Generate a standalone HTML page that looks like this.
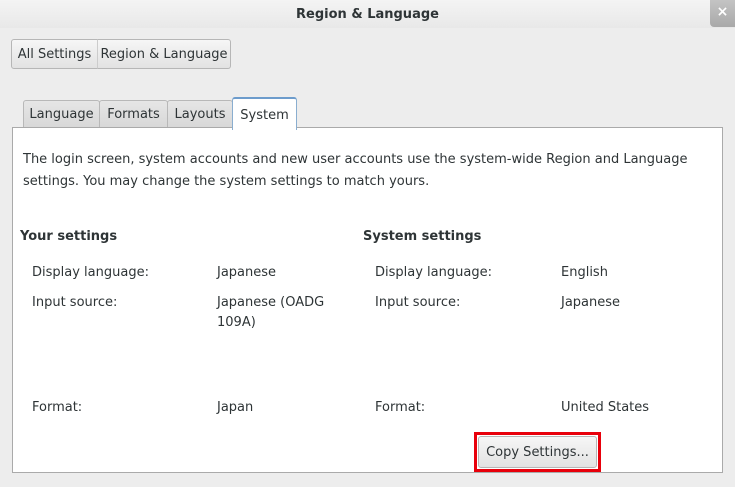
<!DOCTYPE html>
<html><head><style>
body{margin:0;width:735px;height:487px;background:#ededed;font-family:"DejaVu Sans","Liberation Sans",sans-serif;font-size:13px;color:#2e3436;position:relative;overflow:hidden}
.a{position:absolute;white-space:nowrap}
#title{left:0;top:0;width:735px;height:28px;background:linear-gradient(#f4f4f4,#e8e8e8);}
#close{left:710px;top:0;width:25px;height:27px;background:linear-gradient(#c4c4c4,#a9a9a9);border-radius:0 0 0 4px;color:#fff;font-weight:bold;text-align:center;line-height:25px;font-size:14px}
.btn{top:39px;height:28px;border:1px solid #b6b6b6;background:linear-gradient(#f6f6f6,#e2e2e2);line-height:29px;text-align:center;border-radius:3px}
.tab{top:100px;height:26px;border:1px solid #b8b8b8;border-bottom:none;background:linear-gradient(#e6e6e6,#d8d8d8);line-height:28px;text-align:center;border-radius:3px 3px 0 0}
#panel{left:12px;top:127px;width:709px;height:344px;background:#fff;border:1px solid #aaa}
</style></head><body>
<div class="a" id="title"></div>
<div class="a" style="left:0;width:735px;top:7px;text-align:center;font-weight:bold;font-size:13px">Region &amp; Language</div>
<div class="a" id="close">×</div>
<div class="a btn" style="left:11px;width:85px;border-radius:3px 0 0 3px">All Settings</div>
<div class="a btn" style="left:97px;width:132px;border-left:1px solid #ccc;border-radius:0 3px 3px 0">Region &amp; Language</div>
<div id="panel" class="a"></div>
<div class="a tab" style="left:23px;width:75px">Language</div>
<div class="a tab" style="left:99px;width:67px">Formats</div>
<div class="a tab" style="left:167px;width:64px">Layouts</div>
<div class="a tab" style="left:232px;top:97px;height:31px;width:63px;background:#fff;border-color:#8aaed0;border-top:2px solid #6d9ccc;line-height:34px">System</div>
<div class="a" style="left:23px;top:149px;line-height:22px">The login screen, system accounts and new user accounts use the system-wide Region and Language<br>settings. You may change the system settings to match yours.</div>
<div class="a" style="left:20px;top:229px;font-weight:bold">Your settings</div>
<div class="a" style="left:363px;top:229px;font-weight:bold">System settings</div>
<div class="a" style="left:32px;top:265px">Display language:</div>
<div class="a" style="left:217px;top:265px">Japanese</div>
<div class="a" style="left:375px;top:265px">Display language:</div>
<div class="a" style="left:561px;top:265px">English</div>
<div class="a" style="left:32px;top:295px">Input source:</div>
<div class="a" style="left:217px;top:293px;line-height:20px">Japanese (OADG<br>109A)</div>
<div class="a" style="left:375px;top:295px">Input source:</div>
<div class="a" style="left:561px;top:295px">Japanese</div>
<div class="a" style="left:32px;top:400px">Format:</div>
<div class="a" style="left:217px;top:400px">Japan</div>
<div class="a" style="left:375px;top:400px">Format:</div>
<div class="a" style="left:561px;top:400px">United States</div>
<div class="a" style="left:474px;top:432px;width:121px;height:34px;border:3px solid #e8000b"></div>
<div class="a btn" style="left:478px;top:436px;width:117px;height:30px;line-height:32px">Copy Settings...</div>
</body></html>
